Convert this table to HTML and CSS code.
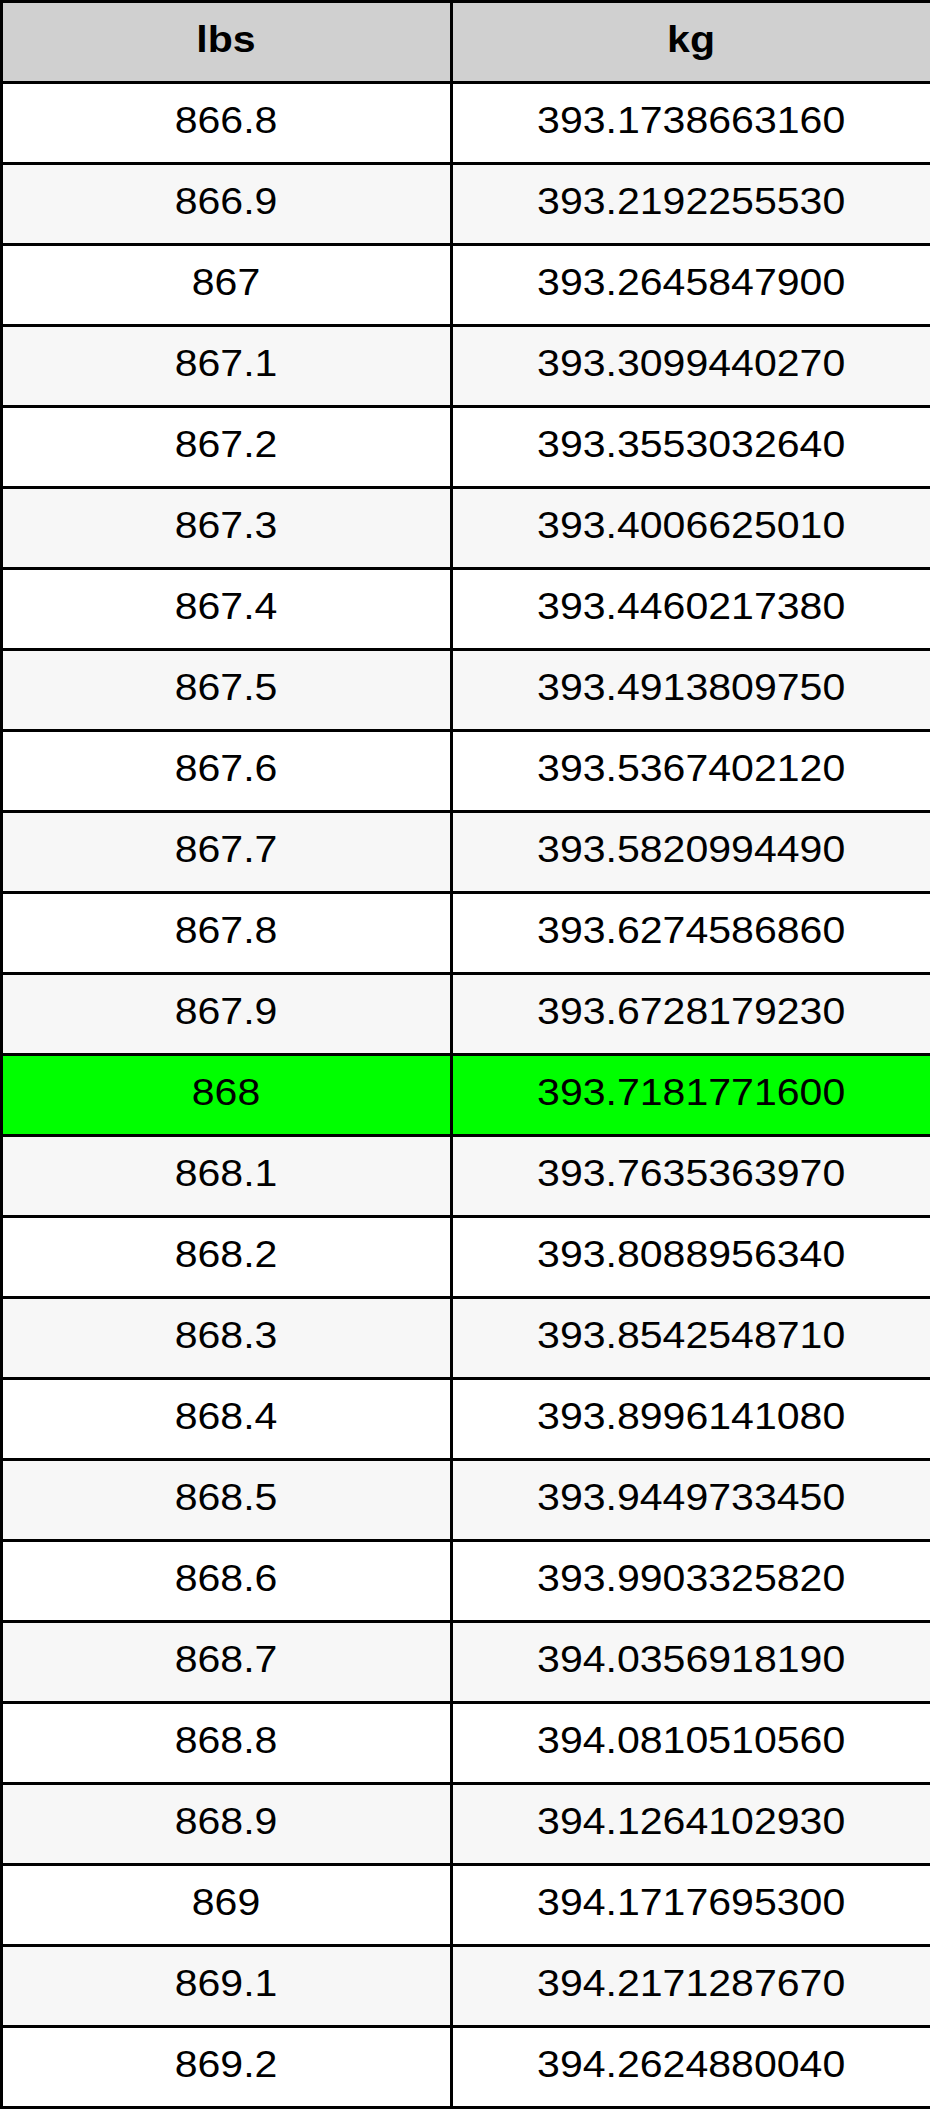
FILE: index.html
```html
<!DOCTYPE html>
<html>
<head>
<meta charset="utf-8">
<link rel="stylesheet" href="styles.css">
</head>
<body>
<table class="conv">
<colgroup><col class="c1"><col class="c2"></colgroup>
<thead><tr><th><span class="t">lbs</span></th><th><span class="t">kg</span></th></tr></thead>
<tbody>
<tr><td><span class="t">866.8</span></td><td><span class="t">393.1738663160</span></td></tr>
<tr><td><span class="t">866.9</span></td><td><span class="t">393.2192255530</span></td></tr>
<tr><td><span class="t">867</span></td><td><span class="t">393.2645847900</span></td></tr>
<tr><td><span class="t">867.1</span></td><td><span class="t">393.3099440270</span></td></tr>
<tr><td><span class="t">867.2</span></td><td><span class="t">393.3553032640</span></td></tr>
<tr><td><span class="t">867.3</span></td><td><span class="t">393.4006625010</span></td></tr>
<tr><td><span class="t">867.4</span></td><td><span class="t">393.4460217380</span></td></tr>
<tr><td><span class="t">867.5</span></td><td><span class="t">393.4913809750</span></td></tr>
<tr><td><span class="t">867.6</span></td><td><span class="t">393.5367402120</span></td></tr>
<tr><td><span class="t">867.7</span></td><td><span class="t">393.5820994490</span></td></tr>
<tr><td><span class="t">867.8</span></td><td><span class="t">393.6274586860</span></td></tr>
<tr><td><span class="t">867.9</span></td><td><span class="t">393.6728179230</span></td></tr>
<tr class="hl"><td><span class="t">868</span></td><td><span class="t">393.7181771600</span></td></tr>
<tr><td><span class="t">868.1</span></td><td><span class="t">393.7635363970</span></td></tr>
<tr><td><span class="t">868.2</span></td><td><span class="t">393.8088956340</span></td></tr>
<tr><td><span class="t">868.3</span></td><td><span class="t">393.8542548710</span></td></tr>
<tr><td><span class="t">868.4</span></td><td><span class="t">393.8996141080</span></td></tr>
<tr><td><span class="t">868.5</span></td><td><span class="t">393.9449733450</span></td></tr>
<tr><td><span class="t">868.6</span></td><td><span class="t">393.9903325820</span></td></tr>
<tr><td><span class="t">868.7</span></td><td><span class="t">394.0356918190</span></td></tr>
<tr><td><span class="t">868.8</span></td><td><span class="t">394.0810510560</span></td></tr>
<tr><td><span class="t">868.9</span></td><td><span class="t">394.1264102930</span></td></tr>
<tr><td><span class="t">869</span></td><td><span class="t">394.1717695300</span></td></tr>
<tr><td><span class="t">869.1</span></td><td><span class="t">394.2171287670</span></td></tr>
<tr><td><span class="t">869.2</span></td><td><span class="t">394.2624880040</span></td></tr>
</tbody>
</table>
</body>
</html>
```
FILE: styles.css
```css
html, body {
  margin: 0;
  padding: 0;
  background: #ffffff;
}
.conv {
  width: 930px;
  border-collapse: collapse;
  table-layout: fixed;
  font-family: "Liberation Sans", Arial, sans-serif;
  color: #000;
}
.c1 { width: 450px; }
.c2 { width: 480px; }
.conv th, .conv td {
  border: 3px solid #000;
  height: 81px;
  padding: 0 0 5px 0;
  box-sizing: border-box;
  text-align: center;
  vertical-align: middle;
  font-size: 36px;
  line-height: 42px;
}
.conv th {
  background: #d0d0d0;
  font-weight: bold;
}
.conv tbody tr:nth-child(even) td {
  background: #f7f7f7;
}
.conv tbody tr.hl td {
  background: #00ff00;
}
.t {
  display: inline-block;
  transform: scaleX(1.14);
}
```
